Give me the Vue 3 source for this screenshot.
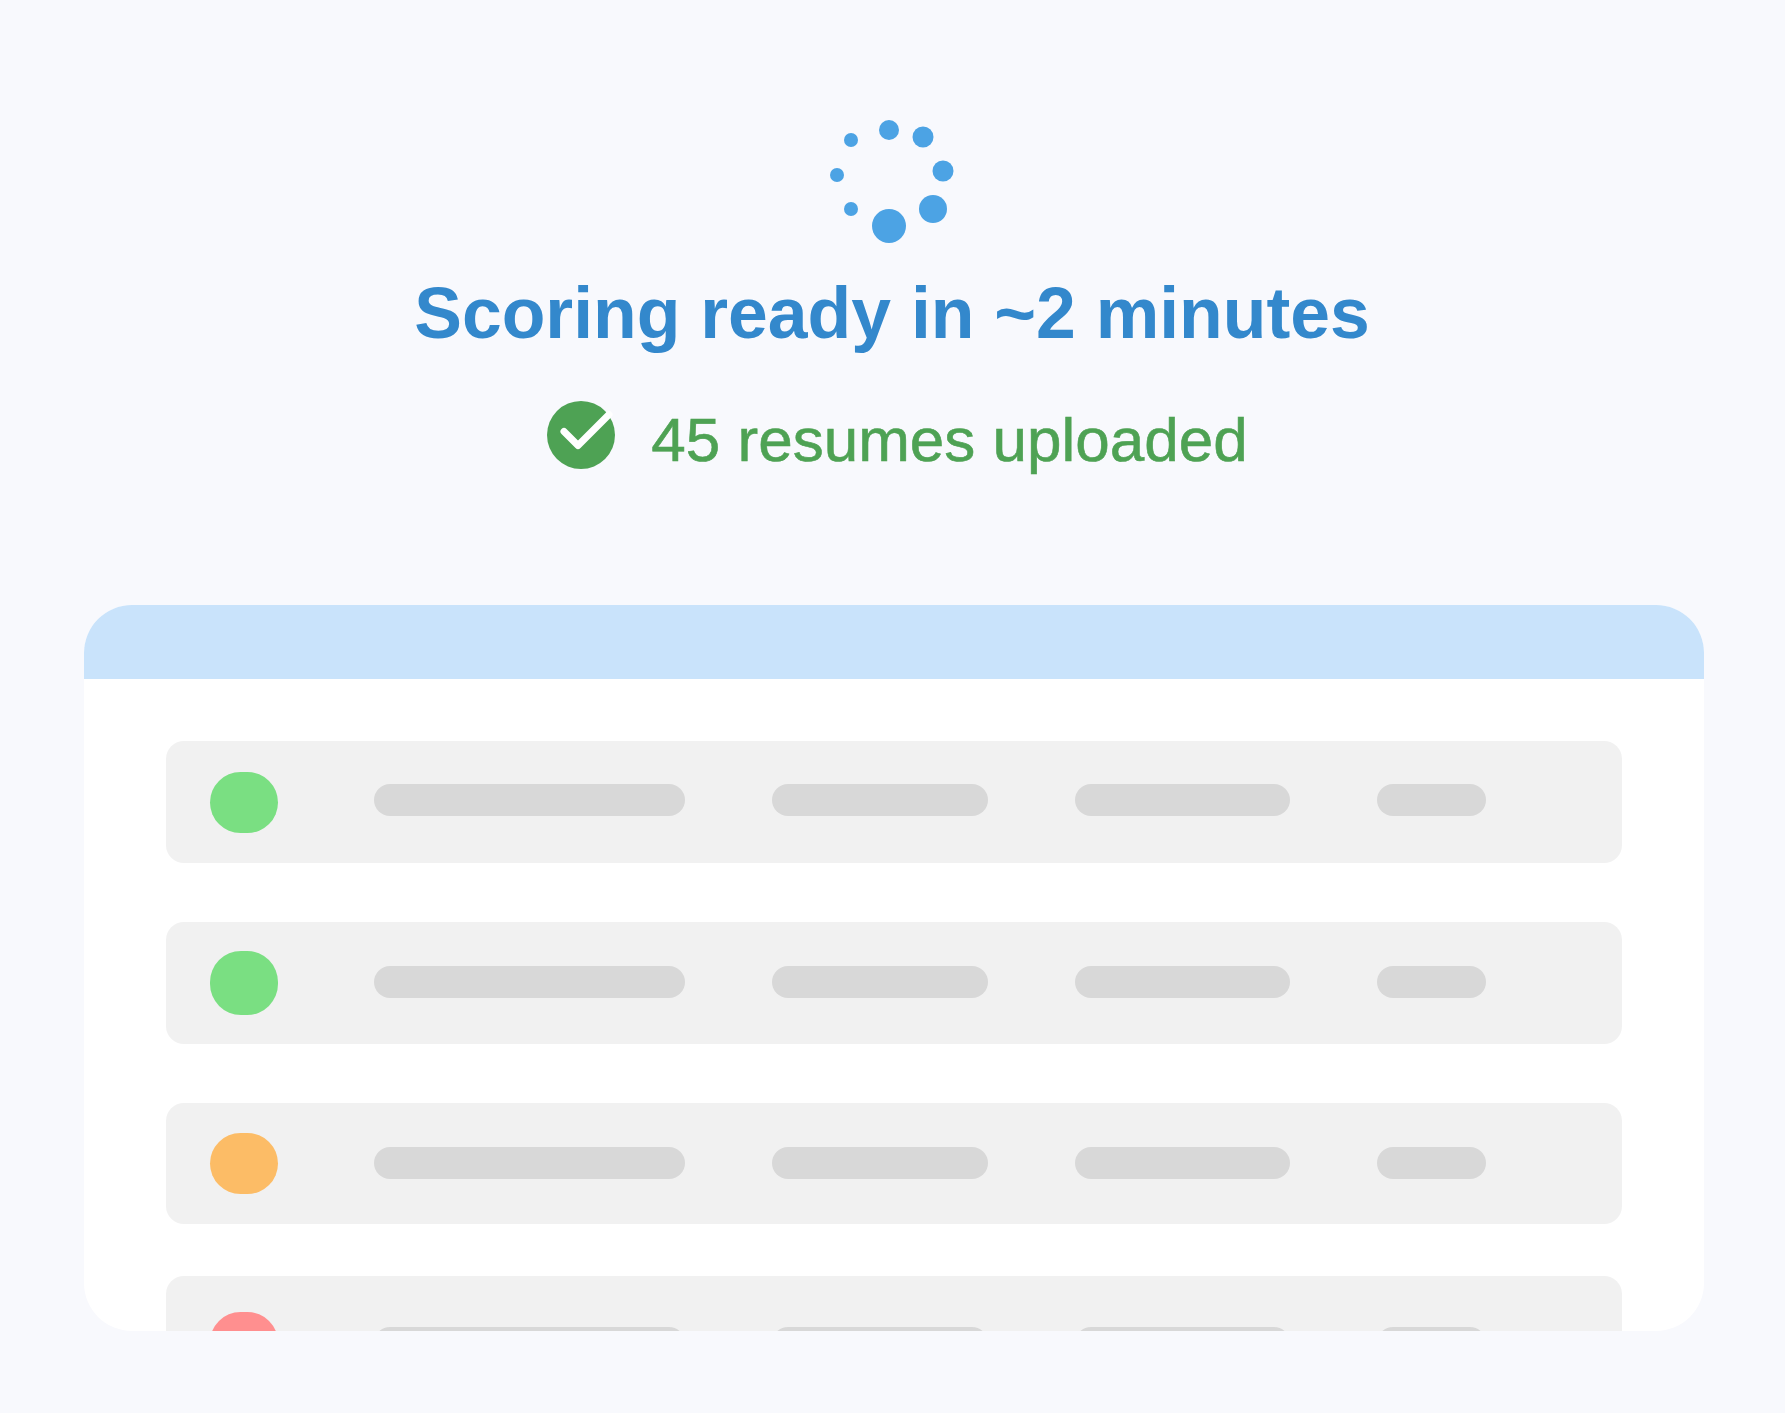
<script setup>
const rows = [
  { id: 1, tone: 'green', offset: 'first', dot: 'dot-a', bar: 'bar-a' },
  { id: 2, tone: 'green', offset: 'second', dot: 'dot-b', bar: 'bar-b' },
  { id: 3, tone: 'orange', offset: 'third', dot: 'dot-c', bar: 'bar-c' },
  { id: 4, tone: 'red', offset: 'fourth', dot: 'dot-d', bar: 'bar-d' },
]
const dots = [
  [889, 130, 10], [923, 137, 10.5], [943, 171, 10.5], [933, 209, 14],
  [889, 226, 17], [851, 209, 7], [837, 175, 7], [851, 140, 7],
]
</script>

<template>
  <main class="page">
    <svg class="spinner" viewBox="820 110 140 136" aria-hidden="true">
      <circle v-for="(d, i) in dots" :key="i" :cx="d[0]" :cy="d[1]" :r="d[2]" fill="#4ca3e4" />
    </svg>
    <h1 class="title">Scoring ready in ~2 minutes</h1>
    <div class="status">
      <svg class="check" viewBox="0 0 72 72" aria-hidden="true">
        <circle cx="35" cy="36" r="34" fill="#4ea254" />
        <path d="M18 32.5 L32 46.5 L63 15.5" fill="none" stroke="#fff" stroke-width="7" stroke-linecap="round" stroke-linejoin="round" />
      </svg>
      <span class="status-text">45 resumes uploaded</span>
    </div>
    <section class="card">
      <div class="card-head"></div>
      <div class="card-body">
        <div v-for="r in rows" :key="r.id" class="row" :class="r.offset">
          <span class="dot" :class="[r.tone, r.dot]"></span>
          <div class="bars" :class="r.bar">
            <span class="bar long"></span>
            <span class="bar mid"></span>
            <span class="bar mid"></span>
            <span class="bar short"></span>
          </div>
        </div>
      </div>
    </section>
  </main>
</template>

<style>
html, body { margin: 0; background: #f8f9fd; }
</style>

<style scoped>
.page {
  box-sizing: border-box;
  width: 1785px;
  height: 1413px;
  padding-top: 110px;
  display: flex;
  flex-direction: column;
  align-items: center;
  background: #f8f9fd;
  font-family: "Liberation Sans", Arial, sans-serif;
  overflow: hidden;
}
.spinner { width: 140px; height: 136px; display: block; margin-left: -5px; flex: none; }
.title {
  margin: 27px 0 0 -1px;
  font-size: 71.5px;
  line-height: 80px;
  font-weight: 700;
  color: #3388cc;
  white-space: nowrap;
}
.status {
  margin: 41px 0 0 9px;
  display: flex;
  align-items: center;
  gap: 33px;
  font-size: 62px;
  line-height: 72px;
  color: #4ea254;
  white-space: nowrap;
}
.status-text { margin-top: 10px; -webkit-text-stroke: 0.6px #4ea254; }
.check { width: 72px; height: 72px; display: block; }
.card {
  margin: 129px 0 0 3px;
  width: 1620px;
  height: 726px;
  border-radius: 48px;
  background: #fff;
  overflow: hidden;
  flex: none;
}
.card-head { height: 74px; background: #c9e3fb; }
.card-body { padding: 62px 82px 0; display: flex; flex-direction: column; }
.row {
  flex: none;
  height: 122px;
  border-radius: 18px;
  background: #f1f1f1;
  padding-left: 44px;
  display: flex;
  align-items: flex-start;
}
.second { margin-top: 59px; }
.third { margin-top: 59px; height: 121px; }
.fourth { margin-top: 52px; }
.dot { width: 68px; height: 61px; border-radius: 31px; flex: none; }
.dot-a { margin-top: 31px; }
.dot-b { margin-top: 29px; height: 64px; }
.dot-c { margin-top: 30px; }
.dot-d { margin-top: 36px; }
.green { background: #7adf82; }
.orange { background: #fcbc66; }
.red { background: #ff8f8f; }
.bars { margin-left: 96px; display: flex; gap: 87px; }
.bar-a { margin-top: 43px; }
.bar-b { margin-top: 44px; }
.bar-c { margin-top: 44px; }
.bar-d { margin-top: 51px; }
.bar { height: 32px; border-radius: 16px; background: #d8d8d8; display: block; }
.long { width: 311px; }
.mid { width: 215.5px; }
.short { width: 109px; }
</style>
